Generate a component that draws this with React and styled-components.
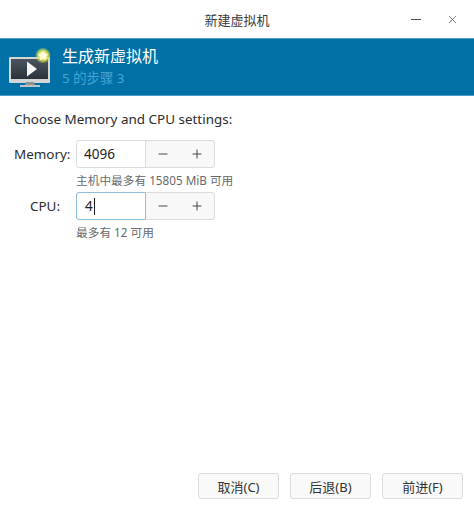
import React from "react";
import styled, { createGlobalStyle } from "styled-components";
import { Minus, Plus, X } from "lucide-react";

const GlobalStyle = createGlobalStyle`
  html, body {
    margin: 0;
    padding: 0;
    background: #ffffff;
  }
  body {
    font-family: "Noto Sans", "Noto Sans CJK SC", sans-serif;
    color: #2e3436;
  }
`;

// Window frame
const Window = styled.div`
  width: 474px;
  height: 511px;
  display: flex;
  flex-direction: column;
  background: #ffffff;
  overflow: hidden;
`;

const TitleBar = styled.div`
  height: 38px;
  flex-shrink: 0;
  display: grid;
  grid-template-columns: 1fr auto 1fr;
  align-items: center;
`;

const Title = styled.div`
  grid-column: 2;
  font-size: 13px;
  color: #3a3a3a;
`;

const WindowControls = styled.div`
  grid-column: 3;
  display: flex;
  justify-content: flex-end;
  align-items: center;
  gap: 25px;
  padding-right: 15px;
  color: #4a4a4a;
`;

const MinimizeBar = styled.span`
  width: 10px;
  height: 1px;
  background: #4a4a4a;
`;

// Blue banner
const Banner = styled.div`
  height: 58px;
  flex-shrink: 0;
  box-sizing: border-box;
  display: flex;
  align-items: center;
  gap: 8px;
  padding: 0 0 1px 8px;
  background: #0070a6;
  border-top: 1px solid #4c9dc8;
  border-bottom: 1px solid #4c9dc8;
`;

const BannerText = styled.div`
  display: flex;
  flex-direction: column;
  gap: 3px;
`;

const BannerTitle = styled.div`
  font-size: 16px;
  line-height: 20px;
  color: #ffffff;
`;

const BannerStep = styled.div`
  font-size: 13.4px;
  line-height: 18px;
  color: #45a5d6;
`;

// Form body
const Content = styled.div`
  flex: 1;
  display: flex;
  flex-direction: column;
  padding: 13px 14px 0;
`;

const Heading = styled.div`
  font-size: 13.45px;
  line-height: 20px;
  margin-bottom: 11px;
  color: #2a2e30;
`;

const FormGrid = styled.div`
  display: grid;
  grid-template-columns: 58px auto;
  column-gap: 4px;
  justify-content: start;
  align-items: center;
`;

const FieldLabel = styled.div`
  font-size: 13.45px;
  padding-left: ${(p) => p.$indent || 0}px;
  color: #2a2e30;
`;

const SpinBox = styled.div`
  display: flex;
  width: 139px;
  height: 28px;
  box-sizing: border-box;
  border: 1px solid #dcdcdc;
  border-radius: 3px;
  background: #f8f8f8;
`;

const SpinInput = styled.div`
  width: 69px;
  margin: ${(p) => (p.$focused ? "-1px 0 -1px -1px" : "0")};
  box-sizing: border-box;
  display: flex;
  align-items: center;
  padding-left: ${(p) => (p.$focused ? "8px" : "7px")};
  font-size: 13.5px;
  color: #1f2324;
  background: #ffffff;
  border-right: 1px solid #dcdcdc;
  border-radius: 3px 0 0 3px;
  ${(p) => p.$focused && "width: 70px; border: 1px solid #8fbfe0;"}
`;

const Caret = styled.span`
  width: 1px;
  height: 17px;
  margin-left: 1px;
  background: #1a1a1a;
`;

const SpinButton = styled.button`
  flex: 1;
  display: flex;
  align-items: center;
  justify-content: center;
  padding: 0;
  border: none;
  background: transparent;
  color: #2e2e2e;
`;

const Hint = styled.div`
  grid-column: 2;
  font-size: 11.7px;
  line-height: 16px;
  margin: 4px 0 4px;
  color: #666a6b;
`;

// Bottom buttons
const Footer = styled.div`
  display: flex;
  justify-content: flex-end;
  gap: 11px;
  padding: 0 11px 12px 0;
`;

const ActionButton = styled.button`
  width: 81px;
  height: 26px;
  padding: 0;
  box-sizing: border-box;
  border: 1px solid #dcdcdc;
  border-radius: 3px;
  background: #f9f9f9;
  font-family: inherit;
  font-size: 13px;
  color: #333333;
`;

const MonitorIcon = () => (
  <svg width="46" height="46" viewBox="0 0 46 46">
    <defs>
      <radialGradient id="glow">
        <stop offset="0.35" stopColor="#fff9a8" />
        <stop offset="0.7" stopColor="#d6e04a" stopOpacity="0.8" />
        <stop offset="1" stopColor="#d6e04a" stopOpacity="0" />
      </radialGradient>
      <linearGradient id="screen" x1="0" y1="0" x2="0" y2="1">
        <stop offset="0" stopColor="#4b5560" />
        <stop offset="1" stopColor="#2b323a" />
      </linearGradient>
    </defs>
    <rect x="1" y="13" width="41" height="26" rx="1" fill="#d4d6d6" />
    <rect x="3" y="15" width="37" height="20" fill="url(#screen)" />
    <path d="M18 38h8l1 3H17z" fill="#8e9293" />
    <rect x="12" y="41" width="20" height="2" fill="#c2c4c4" />
    <path d="M19 17.5 L29 25 L19 32.5Z" fill="#f4f6f6" />
    <circle cx="35" cy="11.5" r="8" fill="url(#glow)" />
    <path d="M35 6.5l1.5 3.4 3.6.4-2.7 2.4.8 3.6-3.2-1.9-3.2 1.9.8-3.6-2.7-2.4 3.6-.4z" fill="#fffde0" />
  </svg>
);

const SpinField = ({ value, focused }) => (
  <SpinBox>
    <SpinInput $focused={focused}>
      {value}
      {focused && <Caret />}
    </SpinInput>
    <SpinButton>
      <Minus size={14} strokeWidth={1.5} />
    </SpinButton>
    <SpinButton>
      <Plus size={14} strokeWidth={1.5} />
    </SpinButton>
  </SpinBox>
);

const App = () => {
  return (
    <Window>
      <GlobalStyle />
      <TitleBar>
        <Title>新建虚拟机</Title>
        <WindowControls>
          <MinimizeBar />
          <X size={13} strokeWidth={1.3} />
        </WindowControls>
      </TitleBar>
      <Banner>
        <MonitorIcon />
        <BannerText>
          <BannerTitle>生成新虚拟机</BannerTitle>
          <BannerStep>5 的步骤 3</BannerStep>
        </BannerText>
      </Banner>
      <Content>
        <Heading>Choose Memory and CPU settings:</Heading>
        <FormGrid>
          <FieldLabel>Memory:</FieldLabel>
          <SpinField value="4096" />
          <Hint>主机中最多有 15805 MiB 可用</Hint>
          <FieldLabel $indent={16}>CPU:</FieldLabel>
          <SpinField value="4" focused />
          <Hint>最多有 12 可用</Hint>
        </FormGrid>
      </Content>
      <Footer>
        <ActionButton>取消(C)</ActionButton>
        <ActionButton>后退(B)</ActionButton>
        <ActionButton>前进(F)</ActionButton>
      </Footer>
    </Window>
  );
};

export default App;
